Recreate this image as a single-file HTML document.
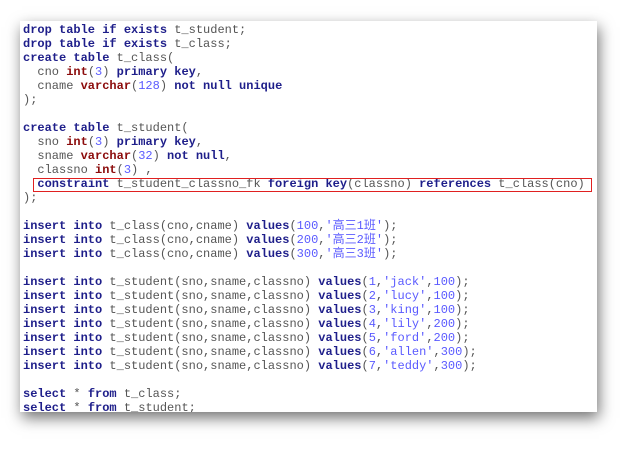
<!DOCTYPE html>
<html><head><meta charset="utf-8"><style>
html,body{margin:0;padding:0;background:#fff;width:639px;height:455px;overflow:hidden}
.paper{position:absolute;left:20px;top:21px;width:577px;height:391px;background:#fff;box-shadow:2px 6px 14px rgba(0,0,0,0.55);overflow:hidden}
pre{margin:0;position:absolute;left:3px;top:2px;font-family:"Liberation Mono","Noto Sans CJK SC",monospace;font-size:12px;line-height:14px;color:#555}
b{color:#1e1e8a}
.t{color:#8b0a0a;font-weight:bold}
.n{color:#5a5aff}
.box{position:absolute;left:13px;top:157px;width:557px;height:12px;border:1.5px solid #e02020}
</style></head><body>
<div class="paper">
<pre><b>drop table if exists</b> t_student;
<b>drop table if exists</b> t_class;
<b>create table</b> t_class(
  cno <span class="t">int</span>(<span class="n">3</span>) <b>primary key</b>,
  cname <span class="t">varchar</span>(<span class="n">128</span>) <b>not null unique</b>
);

<b>create table</b> t_student(
  sno <span class="t">int</span>(<span class="n">3</span>) <b>primary key</b>,
  sname <span class="t">varchar</span>(<span class="n">32</span>) <b>not null</b>,
  classno <span class="t">int</span>(<span class="n">3</span>) ,
  <b>constraint</b> t_student_classno_fk <b>foreign key</b>(classno) <b>references</b> t_class(cno)
);

<b>insert into</b> t_class(cno,cname) <b>values</b>(<span class="n">100</span>,<span class="n">'高三1班'</span>);
<b>insert into</b> t_class(cno,cname) <b>values</b>(<span class="n">200</span>,<span class="n">'高三2班'</span>);
<b>insert into</b> t_class(cno,cname) <b>values</b>(<span class="n">300</span>,<span class="n">'高三3班'</span>);

<b>insert into</b> t_student(sno,sname,classno) <b>values</b>(<span class="n">1</span>,<span class="n">'jack'</span>,<span class="n">100</span>);
<b>insert into</b> t_student(sno,sname,classno) <b>values</b>(<span class="n">2</span>,<span class="n">'lucy'</span>,<span class="n">100</span>);
<b>insert into</b> t_student(sno,sname,classno) <b>values</b>(<span class="n">3</span>,<span class="n">'king'</span>,<span class="n">100</span>);
<b>insert into</b> t_student(sno,sname,classno) <b>values</b>(<span class="n">4</span>,<span class="n">'lily'</span>,<span class="n">200</span>);
<b>insert into</b> t_student(sno,sname,classno) <b>values</b>(<span class="n">5</span>,<span class="n">'ford'</span>,<span class="n">200</span>);
<b>insert into</b> t_student(sno,sname,classno) <b>values</b>(<span class="n">6</span>,<span class="n">'allen'</span>,<span class="n">300</span>);
<b>insert into</b> t_student(sno,sname,classno) <b>values</b>(<span class="n">7</span>,<span class="n">'teddy'</span>,<span class="n">300</span>);

<b>select</b> * <b>from</b> t_class;
<b>select</b> * <b>from</b> t_student;</pre>
<div class="box"></div>
</div>
</body></html>
